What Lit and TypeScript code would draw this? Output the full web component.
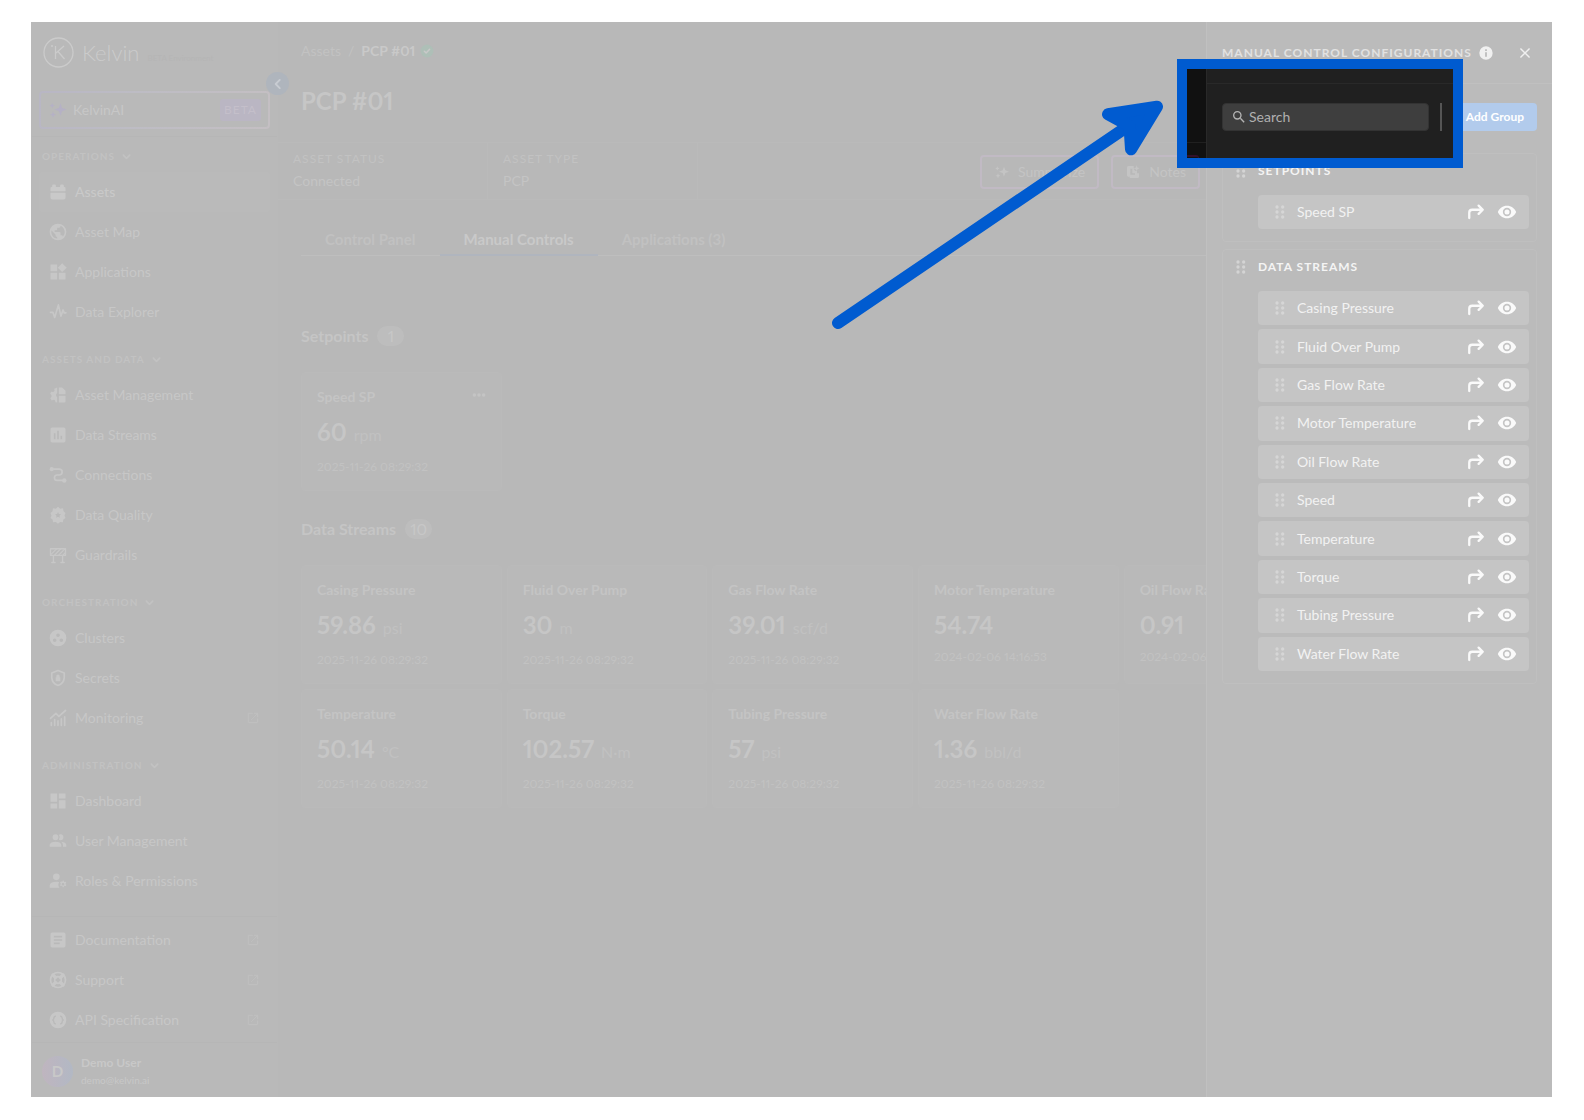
import { LitElement, html, svg, css, nothing, TemplateResult } from "lit";
import { customElement, property } from "lit/decorators.js";

const line = (d: string, width = 2) =>
  svg`<path d=${d} fill="none" stroke="currentColor" stroke-width=${width} stroke-linecap="round" stroke-linejoin="round"></path>`;
const fill = (d: string) => svg`<path d=${d} fill="currentColor" fill-rule="evenodd"></path>`;

const GEAR = "M17 11.5l1.3.3.3-1.3h1.2l.4 1.3.9.5 1.2-.5.7 1.1-.9 1 0 1 .9 1-.7 1.1-1.2-.4-.9.5-.4 1.4h-1.2l-.4-1.4-.9-.5-1.2.4-.7-1.1.9-1 0-1-.9-1 .7-1.1zM19 13.4a1.5 1.5 0 1 0 0 3 1.5 1.5 0 0 0 0-3z";

const ICONS: Record<string, TemplateResult | ReturnType<typeof svg>> = {
  sparkles: fill("M15 4l2 5.500 5.500 2-5.500 2-2 5.500-2-5.500-5.500-2 5.500-2zM5 3.500l1 2.200 2.200 1-2.200 1-1 2.200-1-2.200-2.200-1 2.200-1zM6 14l1.100 2.500 2.500 1.100-2.500 1.100L6 21.200l-1.100-2.500-2.500-1.100 2.500-1.100z"),
  assets: fill("M3 11V7.500Q3 6 4.500 6H5V4.500Q5 3 6.500 3H8Q9.500 3 9.500 4.500V6H14.500V4.500Q14.500 3 16 3H17.500Q19 3 19 4.500V6H19.500Q21 6 21 7.500V11zM3 13H21V19Q21 21 19 21H5Q3 21 3 19z"),
  globe: fill("M17.9,17.39C17.64,16.59 16.89,16 16,16H15V13A1,1 0 0,0 14,12H8V10H10A1,1 0 0,0 11,9V7H13A2,2 0 0,0 15,5V4.59C17.93,5.77 20,8.64 20,12C20,14.08 19.2,15.97 17.9,17.39M11,19.93C7.05,19.44 4,16.08 4,12C4,11.38 4.08,10.78 4.21,10.21L9,15V16A2,2 0 0,0 11,18M12,2A10,10 0 0,0 2,12A10,10 0 0,0 12,22A10,10 0 0,0 22,12A10,10 0 0,0 12,2Z"),
  apps: fill("M3 3H11V11H3zM3 13H11V21H3zM13 13H21V21H13zM17 1.500L22.500 7 17 12 11.800 7z"),
  pulse: line("M3 12.500h3l2 6L12.500 3.500 15.500 17 18 9.500 19.500 13H21.500", 2),
  manage: fill("M11 3v18l-2-.3-.6-2.300-1.600-.8-2.300.9L2.700 16l1.500-1.900v-1.800L2.700 10.500l1-2.500 2.600.4L7.800 7 7.600 4.400zM11 9.500a3 3 0 0 0 0 5zM13 3h4l4 4v4h-8zM13 13h8v6.500q0 1.500-1.500 1.500H13z"),
  chartBox: fill("M5 3H19Q21 3 21 5V19Q21 21 19 21H5Q3 21 3 19V5Q3 3 5 3zM7 10V17H9V10zM11 7V17H13V7zM15 13V17H17V13z"),
  route: svg`${line("M6 5h7.500a3 3 0 0 1 0 7H11a3.200 3.200 0 0 0 0 6.500h6", 2)}<circle cx="4.500" cy="5" r="2.500" fill="currentColor"></circle><circle cx="19.500" cy="18.500" r="2.700" fill="currentColor"></circle>`,
  seal: fill("M12 2l2.600 2.400 3.500-.5.500 3.500L21 9.600 19.800 12.500 21 15.500l-2.600 2-.6 3.300-3.300-.5L12 22.500l-2.600-2.200-3.300.5-.600-3.300L3 15.500l1.200-3L3 9.600l2.500-2.200.4-3.500 3.500.5zM12 8.500l-1.100 2.300-2.500.4 1.800 1.700-.4 2.500 2.200-1.200 2.200 1.200-.400-2.500 1.800-1.700-2.500-.4z"),
  barrier: svg`${line("M3 4.500H21V12.500H3zM6.500 13V21M17.500 13V21M4.500 21h4M15.500 21h4", 1.6)}${line("M4 11l6-6M8 12l7-7M13 12l7-7M18 12l3-3", 1.3)}`,
  clusters: fill("M12 2a10 10 0 1 0 0 20 10 10 0 0 0 0-20zM12 6.500a2.200 2.200 0 1 1 0 4.400 2.200 2.200 0 0 1 0-4.400zM8 12.500a2.200 2.200 0 1 1 0 4.400 2.200 2.200 0 0 1 0-4.400zM16 12.500a2.200 2.200 0 1 1 0 4.400 2.200 2.200 0 0 1 0-4.400z"),
  shield: svg`${line("M12 3L19.500 6V11.500Q19 18.500 12 21Q5 18.500 4.500 11.500V6z", 2)}${fill("M9.200 11H10V9.700a2 2 0 0 1 4 0V11h.8v5H9.200z")}`,
  monitoring: svg`${line("M3 12.500L9.500 6.500 13 10 21 3", 2)}${line("M4 17.500V21M8 14V21M12 15.500V21M16 13V21M20 10.500V21", 2)}`,
  dashboard: fill("M3 3H11V13H3zM3 15H11V21H3zM13 3H21V9H13zM13 11H21V21H13z"),
  users: fill("M16 17V19H2V17S2 13 9 13 16 17 16 17M12.5 7.5A3.5 3.5 0 1 0 9 11A3.5 3.5 0 0 0 12.5 7.5M15.94 13A5.32 5.32 0 0 1 18 17V19H22V17S22 13.37 15.94 13M15 4A3.39 3.39 0 0 0 13.07 4.59A5 5 0 0 1 13.07 10.41A3.39 3.39 0 0 0 15 11A3.5 3.5 0 0 0 15 4Z"),
  roles: svg`<circle cx="10" cy="7" r="4" fill="currentColor"></circle>${fill("M10 13c1.200 0 2.300.1 3.300.4A6 6 0 0 0 13.700 20H2V17.500Q2.500 13 10 13z")}<g transform="translate(-1 1)">${fill(GEAR)}</g>`,
  document: fill("M5 3H19Q21 3 21 5V19Q21 21 19 21H5Q3 21 3 19V5Q3 3 5 3zM7 7V9H17V7zM7 11V13H17V11zM7 15V17H14V15z"),
  support: svg`<circle cx="12" cy="12" r="9" fill="none" stroke="currentColor" stroke-width="2"></circle><circle cx="12" cy="12" r="4" fill="none" stroke="currentColor" stroke-width="2"></circle>${line("M6 6l3 3M18 6l-3 3M6 18l3-3M18 18l-3-3", 4)}`,
  api: fill("M12 2a10 10 0 1 0 0 20 10 10 0 0 0 0-20zM9.500 6.500V8Q7.800 8 7.800 10Q7.800 12 6.500 12Q7.800 12 7.800 14Q7.800 16 9.500 16V17.500Q6.300 17.500 6.300 14.500Q6.300 12.800 5 12.700V11.300Q6.300 11.200 6.300 9.500Q6.300 6.500 9.500 6.500zM14.500 6.500V8Q16.200 8 16.200 10Q16.200 12 17.500 12Q16.200 12 16.200 14Q16.200 16 14.500 16V17.500Q17.700 17.500 17.700 14.500Q17.700 12.800 19 12.700V11.300Q17.700 11.200 17.700 9.500Q17.700 6.500 14.500 6.500z"),
  external: line("M11 4H4V20H20V13M14 4H20V10M20 4L9 15", 1.6),
  chevronDown: line("M5 9l7 7 7-7", 3.5),
  chevronLeft: line("M15 5l-7 7 7 7", 3.2),
  close: line("M5 5L19 19M19 5L5 19", 2.6),
  info: fill("M12 2a10 10 0 1 0 0 20 10 10 0 0 0 0-20zM10.700 6.500h2.600V9h-2.600zM10.700 11h2.600v6.500h-2.600z"),
  check: svg`<circle cx="12" cy="12" r="11" fill="#aebfb7"></circle>${line("M7.500 12.500l3 3 6-6.500", 2.6)}`,
  note: fill("M6 3h7v2.500a5 5 0 0 0 5 5V14h3v5q0 2-2 2H7V19H5q-2 0-2-2V5Q3 3 6 3zM8 7v9h7V14h-4V7zM17.500 2l1.200 3.300L22 6.500l-3.300 1.200L17.500 11l-1.200-3.300L13 6.500l3.300-1.200z"),
  dots: svg`<circle cx="4" cy="12" r="3" fill="currentColor"></circle><circle cx="12" cy="12" r="3" fill="currentColor"></circle><circle cx="20" cy="12" r="3" fill="currentColor"></circle>`,
  drag: svg`${[4.500, 12, 19.500].map((y) => svg`<circle cx="7.500" cy=${y} r="2.500" fill="currentColor"></circle><circle cx="16" cy=${y} r="2.500" fill="currentColor"></circle>`)}`,
  move: line("M3 20V13Q3 9 7 9H20.500M15.500 3.500L21 9l-5.500 5.500", 3.100),
  eye: fill("M12,9A3,3 0 0,0 9,12A3,3 0 0,0 12,15A3,3 0 0,0 15,12A3,3 0 0,0 12,9M12,17A5,5 0 0,1 7,12A5,5 0 0,1 12,7A5,5 0 0,1 17,12A5,5 0 0,1 12,17M12,4.5C7,4.5 2.73,7.61 1,12C2.73,16.39 7,19.5 12,19.5C17,19.5 21.27,16.39 23,12C21.27,7.61 17,4.5 12,4.5Z"),
  search: fill("M9.5,3A6.5,6.5 0 0,1 16,9.5C16,11.11 15.41,12.59 14.44,13.73L14.71,14H15.5L20.5,19L19,20.5L14,15.5V14.71L13.73,14.44C12.59,15.41 11.11,16 9.5,16A6.5,6.5 0 0,1 3,9.5A6.5,6.5 0 0,1 9.5,3M9.5,5C7,5 5,7 5,9.5C5,12 7,14 9.5,14C12,14 14,12 14,9.5C14,7 12,5 9.5,5Z"),
};

const icon = (name: string, size = 20) =>
  html`<svg width=${size} height=${size} viewBox="0 0 24 24" aria-hidden="true">${ICONS[name]}</svg>`;

const base = css`
  *, *::before, *::after { box-sizing: border-box; }
  svg { display: block; flex: none; }
  h1, h2, h3, p, ul, dl, dd { margin: 0; padding: 0; font-weight: inherit; font-size: inherit; }
  ul { list-style: none; }
  a { color: inherit; text-decoration: none; }
  button { font: inherit; color: inherit; background: none; border: 0; padding: 0; margin: 0; }
`;

interface NavItem { icon: string; label: string; external?: boolean; active?: boolean; }
interface NavSection { title: string; items: NavItem[]; }

const NAV: NavSection[] = [
  { title: "Operations", items: [
    { icon: "assets", label: "Assets", active: true },
    { icon: "globe", label: "Asset Map" },
    { icon: "apps", label: "Applications" },
    { icon: "pulse", label: "Data Explorer" },
  ] },
  { title: "Assets and Data", items: [
    { icon: "manage", label: "Asset Management" },
    { icon: "chartBox", label: "Data Streams" },
    { icon: "route", label: "Connections" },
    { icon: "seal", label: "Data Quality" },
    { icon: "barrier", label: "Guardrails" },
  ] },
  { title: "Orchestration", items: [
    { icon: "clusters", label: "Clusters" },
    { icon: "shield", label: "Secrets" },
    { icon: "monitoring", label: "Monitoring", external: true },
  ] },
  { title: "Administration", items: [
    { icon: "dashboard", label: "Dashboard" },
    { icon: "users", label: "User Management" },
    { icon: "roles", label: "Roles & Permissions" },
  ] },
];

const LINKS: NavItem[] = [
  { icon: "document", label: "Documentation", external: true },
  { icon: "support", label: "Support", external: true },
  { icon: "api", label: "API Specification", external: true },
];

@customElement("side-nav")
export class SideNav extends LitElement {
  static styles = [base, css`
    :host { display: flex; flex-direction: column; flex: none; width: 247px; position: relative; background: #b9b9b9; color: #c7c7c7; font-size: 14px; line-height: 20px; }
    .brand { display: flex; align-items: center; gap: 8px; padding: 15px 11px 0 12px; height: 46px; color: #cbcbcb; }
    .word { font-size: 22px; font-weight: 300; line-height: 28px; }
    .release { font-size: 8px; line-height: 10px; color: #b5b5b5; padding-top: 10px; white-space: nowrap; }
    .ai { display: flex; align-items: center; gap: 5px; height: 38px; margin: 23px 8px 0; padding: 0 7px; border-radius: 4px; border: 2px solid transparent; background: linear-gradient(#b9b9b9, #b9b9b9) padding-box, linear-gradient(100deg, #b8b6c4, #bdbcc4 40%, #c4bfc3) border-box; }
    .ai .spark { color: #b5b1c5; }
    .beta { margin-left: auto; padding: 0 4px; border-radius: 3px; background: #bab6c3; color: #c4bfca; font-size: 12px; line-height: 22px; letter-spacing: 1px; }
    .rule { height: 1px; margin: 0 1px; background: #b6b6b6; }
    .top { margin-top: 7px; }
    .section { padding-top: 20px; }
    .first { padding-top: 12px; }
    .heading { display: flex; align-items: center; gap: 6px; height: 14px; margin: 0 11px 9px; font-size: 10px; font-weight: 700; letter-spacing: 1px; text-transform: uppercase; color: #c2c2c2; }
    .item { display: flex; align-items: center; gap: 7px; height: 40px; margin: 0 8px; padding: 0 10px 0 9px; border-radius: 4px; }
    .active { background: #bababa; color: #c9c9c9; font-weight: 500; }
    .label { flex: 1; }
    .out { color: #bfbfbf; }
    .foot { margin-top: auto; }
    .links { padding: 3px 0 2px; }
    .user { display: flex; align-items: center; gap: 8px; height: 54px; padding: 2px 11px 0; }
    .avatar { display: grid; place-items: center; width: 31px; height: 31px; border-radius: 50%; background: linear-gradient(90deg, #bfb5bf, #b2b8c4); color: #c8c8c8; font-size: 15px; font-weight: 700; }
    .name { font-size: 12px; line-height: 18px; font-weight: 700; color: #c8c8c8; }
    .mail { font-size: 10px; line-height: 17px; color: #c8c8c8; }
    .collapse { position: absolute; right: -11px; top: 50px; width: 23px; height: 23px; border-radius: 50%; display: grid; place-items: center; background: #afb5bd; color: #c8ccd2; z-index: 1; }
  `];

  private item(i: NavItem) {
    return html`<li><a href="#" class="item ${i.active ? "active" : ""}">${icon(i.icon)}<span class="label">${i.label}</span>${i.external ? html`<span class="out">${icon("external", 14)}</span>` : nothing}</a></li>`;
  }

  render() {
    return html`
      <div class="brand">
        <svg width="31" height="31" viewBox="0 0 31 31" aria-hidden="true">
          <circle cx="15.500" cy="15.500" r="14.500" fill="none" stroke="currentColor" stroke-width="1.300"></circle>
          <path d="M12.500 9V22M21 9L13 16M15 14.500L21.500 22" fill="none" stroke="currentColor" stroke-width="1.300"></path>
          <circle cx="9" cy="9" r="1" fill="currentColor"></circle>
        </svg>
        <span class="word">Kelvin</span>
        <span class="release">BETA Environment</span>
      </div>
      <a href="#" class="ai"><span class="spark">${icon("sparkles")}</span>KelvinAI<span class="beta">BETA</span></a>
      <div class="rule top"></div>
      <nav>
        ${NAV.map((s, n) => html`
          <div class="section ${n === 0 ? "first" : ""}">
            <h3 class="heading">${s.title}${icon("chevronDown", 11)}</h3>
            <ul>${s.items.map((i) => this.item(i))}</ul>
          </div>`)}
      </nav>
      <div class="foot">
        <div class="rule"></div>
        <ul class="links">${LINKS.map((i) => this.item(i))}</ul>
        <div class="rule"></div>
        <div class="user"><span class="avatar">D</span><div><p class="name">Demo User</p><p class="mail">demo@kelvin.ai</p></div></div>
      </div>
      <button class="collapse" aria-label="Collapse menu">${icon("chevronLeft", 14)}</button>`;
  }
}

interface Reading { name: string; value: string; unit?: string; time: string; menu?: boolean; newRow?: boolean; }
const NOW = "2025-11-26 08:29:32";
const OLD = "2024-02-06 14:16:53";
const SETPOINTS: Reading[] = [{ name: "Speed SP", value: "60", unit: "rpm", time: NOW, menu: true }];
const STREAMS: Reading[] = [
  { name: "Casing Pressure", value: "59.86", unit: "psi", time: NOW },
  { name: "Fluid Over Pump", value: "30", unit: "m", time: NOW },
  { name: "Gas Flow Rate", value: "39.01", unit: "scf/d", time: NOW },
  { name: "Motor Temperature", value: "54.74", time: OLD },
  { name: "Oil Flow Rate", value: "0.91", time: OLD },
  { name: "Temperature", value: "50.14", unit: "°C", time: NOW, newRow: true },
  { name: "Torque", value: "102.57", unit: "N·m", time: NOW },
  { name: "Tubing Pressure", value: "57", unit: "psi", time: NOW },
  { name: "Water Flow Rate", value: "1.36", unit: "bbl/d", time: NOW },
];
const STREAM_NAMES = [
  "Casing Pressure", "Fluid Over Pump", "Gas Flow Rate", "Motor Temperature", "Oil Flow Rate",
  "Speed", "Temperature", "Torque", "Tubing Pressure", "Water Flow Rate",
];

@customElement("asset-page")
export class AssetPage extends LitElement {
  static styles = [base, css`
    :host { display: block; flex: 1; min-width: 0; color: #c4c4c4; font-size: 14px; line-height: 20px; font-variant-numeric: proportional-nums; }
    .crumbs { display: flex; align-items: center; gap: 7px; padding: 19px 23px 0; color: #c2c2c2; }
    .here { display: flex; align-items: center; gap: 5px; color: #c9c9c9; font-weight: 700; }
    .title { padding: 24px 23px 0; font-size: 24px; line-height: 32px; font-weight: 700; color: #c6c6c6; }
    .facts { display: flex; margin-top: 25px; height: 58px; border: solid #bababa; border-width: 1px 0; padding-right: calc(var(--drawer) + 6px); }
    .fact { width: 210px; padding: 7px 15px; border-right: 1px solid #bababa; }
    .fact dt { font-size: 12px; line-height: 18px; letter-spacing: 1px; text-transform: uppercase; color: #c2c2c2; }
    .fact dd { line-height: 26px; }
    .actions { display: flex; gap: 12px; align-items: center; margin-left: auto; padding-top: 1px; }
    .action { display: flex; align-items: center; gap: 8px; height: 34px; padding: 0 12px; border: 2px solid #c1bac4; border-radius: 4px; }
    .tabs { display: flex; margin: 22px 22px 0 23px; border-bottom: 1px solid #bebebe; font-size: 15px; font-weight: 700; color: #c1c1c1; }
    .tab { padding: 7px 24px 6px; height: 34px; border-bottom: 2px solid transparent; margin-bottom: -1px; }
    .current { color: #c9c9c9; border-color: #b0b5be; }
    .group { padding: 0 22px 0 23px; }
    .heading { display: flex; align-items: center; gap: 9px; height: 20px; font-size: 16px; font-weight: 700; color: #c5c5c5; margin-bottom: 26px; }
    .count { min-width: 27px; text-align: center; border-radius: 10px; background: #bdbdbd; color: #c7c7c7; font-weight: 400; }
    .first { margin-top: 70px; margin-bottom: 28px; }
    .grid { display: grid; grid-template-columns: repeat(6, 1fr); gap: 5px; }
    .card { height: 119px; padding: 14px 15px 0; border: 1px solid #bababa; border-radius: 4px; background: #b9b9b9; }
    .new-row { grid-column-start: 1; }
    .top { display: flex; justify-content: space-between; align-items: flex-start; }
    .menu { padding-top: 1px; }
    .name { font-weight: 700; color: #c4c4c4; white-space: nowrap; }
    .reading { display: flex; align-items: baseline; gap: 7px; margin-top: 9px; line-height: 32px; }
    .value { font-size: 24px; font-weight: 700; color: #c6c6c6; }
    .unit { font-size: 16px; color: #c1c1c1; }
    .time { font-size: 12px; line-height: 18px; margin-top: 7px; color: #c2c2c2; white-space: nowrap; }
  `];

  private cards(list: Reading[]) {
    return html`<div class="grid">${list.map((r) => html`
      <article class="card ${r.newRow ? "new-row" : ""}">
        <div class="top"><h3 class="name">${r.name}</h3>${r.menu ? html`<button class="menu" aria-label="Card menu">${icon("dots", 14)}</button>` : nothing}</div>
        <p class="reading"><span class="value">${r.value}</span>${r.unit ? html`<span class="unit">${r.unit}</span>` : nothing}</p>
        <p class="time">${r.time}</p>
      </article>`)}</div>`;
  }

  render() {
    return html`
      <nav class="crumbs"><a href="#">Assets</a><span>/</span><span class="here">PCP #01 ${icon("check", 14)}</span></nav>
      <h1 class="title">PCP #01</h1>
      <dl class="facts">
        <div class="fact"><dt>Asset Status</dt><dd>Connected</dd></div>
        <div class="fact"><dt>Asset Type</dt><dd>PCP</dd></div>
        <div class="actions">
          <button class="action">${icon("sparkles", 16)}Summarize</button>
          <button class="action">${icon("note", 16)}Notes</button>
        </div>
      </dl>
      <nav class="tabs">
        <a href="#" class="tab">Control Panel</a>
        <a href="#" class="tab current">Manual Controls</a>
        <a href="#" class="tab">Applications (3)</a>
      </nav>
      <section class="group first"><h2 class="heading">Setpoints<span class="count">1</span></h2>${this.cards(SETPOINTS)}</section>
      <section class="group"><h2 class="heading">Data Streams<span class="count">${STREAM_NAMES.length}</span></h2>${this.cards(STREAMS)}</section>`;
  }
}

@customElement("control-group")
export class ControlGroup extends LitElement {
  @property() heading = "";
  @property({ type: Array }) names: string[] = [];

  static styles = [base, css`
    :host { display: block; border: 1px solid #bfbfbf; border-radius: 4px; padding: 7px 7px 12px 10px; }
    .head { display: flex; align-items: center; gap: 9px; height: 20px; color: #d4d4d4; }
    .title { flex: 1; font-size: 12px; line-height: 20px; font-weight: 700; letter-spacing: 1px; text-transform: uppercase; color: #f4f4f4; }
    .list { display: grid; grid-auto-rows: minmax(34px, 1fr); gap: 4px; margin: 14px 0 0 25px; }
    .long { min-height: 380px; }
    .row { display: flex; align-items: center; padding: 0 12px 0 14px; border-radius: 4px; background: #c5c5c5; color: #f2f2f2; }
    .grip { color: #d6d6d6; }
    .name { flex: 1; padding-left: 9px; }
    .tools { display: flex; gap: 12px; align-items: center; color: #fafafa; }
  `];

  render() {
    return html`
      <div class="head">${icon("drag", 16)}<h3 class="title">${this.heading}</h3></div>
      <ul class="list ${this.names.length > 1 ? "long" : ""}">${this.names.map((n) => html`
        <li class="row"><span class="grip">${icon("drag", 16)}</span><span class="name">${n}</span>
          <span class="tools"><button aria-label="Move ${n}">${icon("move", 18)}</button><button aria-label="Show ${n}">${icon("eye", 20)}</button></span></li>`)}
      </ul>`;
  }
}

@customElement("config-drawer")
export class ConfigDrawer extends LitElement {
  static styles = [base, css`
    :host { display: flex; flex-direction: column; background: #bbbbbb; border-left: 1px solid #c0c0c0; font-size: 14px; line-height: 20px; }
    .head { display: flex; align-items: center; height: 62px; padding: 0 20px 0 15px; border-bottom: 1px solid #c0c0c0; color: #e2e2e2; }
    .title { font-size: 12px; font-weight: 700; letter-spacing: 1px; text-transform: uppercase; white-space: nowrap; }
    .info { margin-left: 6px; color: #f0f0f0; }
    .close { margin-left: auto; color: #f0f0f0; }
    .tools { display: flex; align-items: center; padding: 19px 15px 22px; }
    .search { position: relative; z-index: 2; flex: 1; min-width: 0; display: flex; align-items: center; gap: 2px; height: 28px; padding: 0 8px; border: 1px solid #333; border-radius: 4px; background: #3e3e3e; color: #b4b4b4; }
    .field { flex: 1; min-width: 0; border: 0; outline: 0; padding: 0; background: none; font: inherit; color: #b4b4b4; }
    .field::placeholder { color: #b0b0b0; opacity: 1; }
    .bar { position: relative; z-index: 2; flex: none; width: 2px; height: 28px; margin: 0 11px; background: #555; }
    .add { flex: none; height: 28px; padding: 0 13px; border-radius: 4px; background: #b2cbec; color: #fff; font-size: 12px; font-weight: 700; white-space: nowrap; }
    .groups { display: flex; flex-direction: column; gap: 7px; padding: 0 15px; }
    .spot { position: absolute; z-index: 1; left: -30px; top: 37px; width: 286px; height: 109px; border: 10px solid #005bd0; background: linear-gradient(90deg, #111 19px, #292929 19px, #292929 20px, #202020 20px); }
    .edge { position: absolute; left: 20px; right: 0; top: 14px; height: 1px; background: #292929; }
    .fact { position: absolute; left: 0; width: 19px; top: 73px; height: 1px; background: #202020; }
    .button { position: absolute; left: 0; width: 12px; bottom: 0; height: 3px; border-top: 2px solid #32102a; border-right: 1px solid #32102a; border-top-right-radius: 3px; }
  `];

  render() {
    return html`
      <header class="head"><h2 class="title">Manual Control Configurations</h2><span class="info">${icon("info", 16)}</span>
        <button class="close" aria-label="Close">${icon("close", 14)}</button></header>
      <div class="spot" aria-hidden="true"><span class="edge"></span><span class="fact"></span><span class="button"></span></div>
      <div class="tools">
        <label class="search">${icon("search", 16)}<input class="field" type="search" placeholder="Search" aria-label="Search" /></label>
        <span class="bar"></span>
        <button class="add">Add Group</button>
      </div>
      <div class="groups">
        <control-group heading="Setpoints" .names=${SETPOINTS.map((r) => r.name)}></control-group>
        <control-group heading="Data Streams" .names=${STREAM_NAMES}></control-group>
      </div>`;
  }
}

@customElement("app-root")
export class AppRoot extends LitElement {
  static styles = [base, css`
    :host { display: flex; min-height: 100vh; padding: 22px 32px 23px 31px; box-sizing: border-box; background: #fff; font-family: Lato, "Open Sans", "Liberation Sans", sans-serif; --drawer: 346px; }
    .stage { position: relative; flex: 1; min-width: 0; display: flex; background: #b8b8b8; }
    .drawer { position: absolute; top: 0; right: 0; bottom: 0; width: var(--drawer); z-index: 2; }
    .arrow { position: absolute; top: 78px; right: 388px; z-index: 3; pointer-events: none; }
  `];

  render() {
    return html`
      <div class="stage">
        <side-nav></side-nav>
        <asset-page></asset-page>
        <config-drawer class="drawer"></config-drawer>
        <svg class="arrow" width="334" height="230" viewBox="830 100 334 230" aria-hidden="true">
          <g fill="#005bd0" stroke="#005bd0" stroke-width="12" stroke-linecap="round" stroke-linejoin="round">
            <path d="M838 323L1140 118"></path>
            <path d="M1108 114.300L1157 106.700L1131 149.300L1129.500 126z"></path>
          </g>
        </svg>
      </div>`;
  }
}
